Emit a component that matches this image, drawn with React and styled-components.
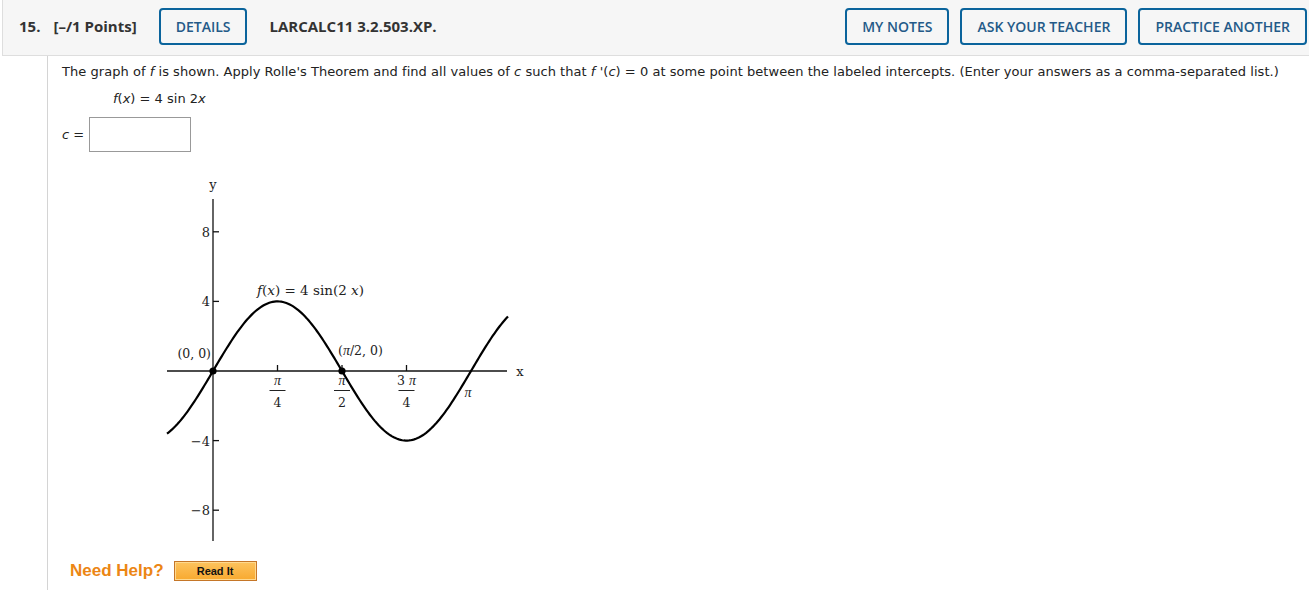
import React from "react";
import styled, { createGlobalStyle } from "styled-components";

const Global = createGlobalStyle`
  body {
    margin: 0;
    background: #fff;
    font-family: "Open Sans", "Liberation Sans", sans-serif;
  }
`;

const Page = styled.div`
  width: 1309px;
  height: 590px;
  overflow: hidden;
`;

const Header = styled.div`
  display: flex;
  align-items: flex-start;
  box-sizing: border-box;
  height: 56px;
  margin-left: 2px;
  padding: 8px 2px 0 16px;
  background: #f6f6f6;
  border-left: 1px solid #dedede;
  border-bottom: 1px solid #dedede;
`;

const Title = styled.span`
  line-height: 37px;
  font-size: 15px;
  font-weight: 700;
  color: #333;
  margin-right: ${p => p.gap || 0}px;
`;

const HeaderButton = styled.button`
  height: 37px;
  padding: 0 ${p => p.pad || 15}px;
  border: 2px solid #0b649c;
  border-radius: 4px;
  background: #f6f6f6;
  color: #245a88;
  font-family: "Open Sans", "Liberation Sans", sans-serif;
  font-size: 14px;
  font-weight: 600;
  margin-right: ${p => p.gap || 0}px;
`;

const Spacer = styled.div`
  flex: 1;
`;

const Content = styled.div`
  margin-left: 47px;
  border-left: 1px solid #d4d4d4;
  padding: 7px 0 0 14px;
  height: 535px;
  font-family: Verdana, "DejaVu Sans", sans-serif;
  font-size: 13px;
  color: #222;
`;

const Question = styled.div`
  line-height: 18px;
  white-space: nowrap;
  letter-spacing: 0.04px;
`;

const Formula = styled.div`
  margin: 9px 0 0 51px;
  line-height: 18px;
`;

const AnswerRow = styled.div`
  display: flex;
  align-items: center;
  gap: 5px;
  margin-top: 9px;
`;

const AnswerBox = styled.input`
  box-sizing: border-box;
  width: 102px;
  height: 35px;
  border: 1px solid #999;
  padding: 0;
  margin: 0;
`;

const Graph = styled.svg`
  display: block;
  margin: 17px 0 0 0;
`;

const HelpRow = styled.div`
  display: flex;
  align-items: center;
  gap: 10px;
  margin: 17px 0 0 8px;
`;

const HelpText = styled.span`
  font-family: "Liberation Sans", Arial, sans-serif;
  font-size: 17px;
  font-weight: 700;
  color: #ec8614;
`;

const ReadIt = styled.button`
  width: 83px;
  height: 20px;
  padding: 0;
  border: 1px solid #c57628;
  background: linear-gradient(#fdc35e, #f8a92f);
  box-shadow: inset 0 0 0 1px #ffd98f;
  font-family: "Liberation Sans", Arial, sans-serif;
  font-size: 11px;
  font-weight: 700;
  color: #111;
`;

const I = styled.i`
  font-style: italic;
`;

// graph coords: origin at (151, 202) in svg, 1 unit y = 17.4px, pi = 258px
const OX = 151;
const OY = 202;
const UY = 17.4;
const PI_PX = 258;

const px = x => OX + (x / Math.PI) * PI_PX;
const py = y => OY - y * UY;

function curvePath() {
  const pts = [];
  const x0 = -46 / PI_PX * Math.PI;
  const x1 = 295 / PI_PX * Math.PI;
  const n = 200;
  for (let i = 0; i <= n; i++) {
    const x = x0 + ((x1 - x0) * i) / n;
    pts.push(`${px(x).toFixed(2)},${py(4 * Math.sin(2 * x)).toFixed(2)}`);
  }
  return "M" + pts.join(" L");
}

const serif = { fontFamily: '"DejaVu Serif", "Liberation Serif", serif' };
const piFont = { fontFamily: '"Liberation Serif", serif', fontStyle: "italic" };

function Pi() {
  return <tspan style={piFont} fontSize="14">π</tspan>;
}

function Fraction({ x, num, den }) {
  return (
    <g style={serif} fontSize="12.5" fill="#222" textAnchor="middle">
      <text x={x} y={216}>{num}<Pi /></text>
      <line x1={x - 8} x2={x + 8} y1={221.5} y2={221.5} stroke="#222" strokeWidth="1" />
      <text x={x} y={238}>{den}</text>
    </g>
  );
}

function RolleGraph() {
  return (
    <Graph width="470" height="375" viewBox="0 0 470 375">
      <g stroke="#111" strokeWidth="1.3" fill="none">
        <line x1={OX} x2={OX} y1={30} y2={372} />
        <line x1={105} x2={445} y1={OY} y2={OY} />
        {[8, 4, -4, -8].map(v => (
          <line key={v} x1={OX} x2={OX + 6} y1={py(v)} y2={py(v)} />
        ))}
        {[1, 2, 3].map(k => (
          <line key={k} x1={px((k * Math.PI) / 4)} x2={px((k * Math.PI) / 4)} y1={OY} y2={OY - 6} />
        ))}
      </g>
      <path d={curvePath()} stroke="#000" strokeWidth="2.2" fill="none" />
      <circle cx={OX} cy={OY} r="3.6" fill="#000" />
      <circle cx={px(Math.PI / 2)} cy={OY} r="3.6" fill="#000" />
      <g style={serif} fontSize="13" fill="#222">
        <text x={OX} y={20} textAnchor="middle">y</text>
        <text x={458} y={207} textAnchor="middle">x</text>
        <text x={148} y={py(8) + 5} textAnchor="end">8</text>
        <text x={148} y={py(4) + 5} textAnchor="end">4</text>
        <text x={148} y={py(-4) + 5} textAnchor="end">−4</text>
        <text x={148} y={py(-8) + 5} textAnchor="end">−8</text>
        <text x={149} y={189} textAnchor="end" fontSize="12.5">(0, 0)</text>
        <text x={276} y={186} fontSize="12.5">(<Pi />/2, 0)</text>
        <text x={195} y={126} fontSize="13.5">
          <tspan fontStyle="italic">f</tspan>(<tspan fontStyle="italic">x</tspan>) = 4 sin(2 <tspan fontStyle="italic">x</tspan>)
        </text>
        <text x={406} y={228} textAnchor="middle"><Pi /></text>
      </g>
      <Fraction x={px(Math.PI / 4)} num="" den="4" />
      <Fraction x={px(Math.PI / 2)} num="" den="2" />
      <Fraction x={px((3 * Math.PI) / 4)} num="3 " den="4" />
    </Graph>
  );
}

export default function App() {
  return (
    <Page>
      <Global />
      <Header>
        <Title gap={13}>15.</Title>
        <Title gap={22}>[–/1 Points]</Title>
        <HeaderButton gap={22}>DETAILS</HeaderButton>
        <Title>LARCALC11 3.2.503.XP.</Title>
        <Spacer />
        <HeaderButton gap={11}>MY NOTES</HeaderButton>
        <HeaderButton gap={11}>ASK YOUR TEACHER</HeaderButton>
        <HeaderButton>PRACTICE ANOTHER</HeaderButton>
      </Header>
      <Content>
        <Question>
          The graph of <I>f</I> is shown. Apply Rolle's Theorem and find all values of <I>c</I> such
          that <I>f</I> '(<I>c</I>) = 0 at some point between the labeled intercepts. (Enter your
          answers as a comma-separated list.)
        </Question>
        <Formula>
          <I>f</I>(<I>x</I>) = 4 sin 2<I>x</I>
        </Formula>
        <AnswerRow>
          <span>
            <I>c</I> =
          </span>
          <AnswerBox type="text" />
        </AnswerRow>
        <RolleGraph />
        <HelpRow>
          <HelpText>Need Help?</HelpText>
          <ReadIt>Read It</ReadIt>
        </HelpRow>
      </Content>
    </Page>
  );
}
